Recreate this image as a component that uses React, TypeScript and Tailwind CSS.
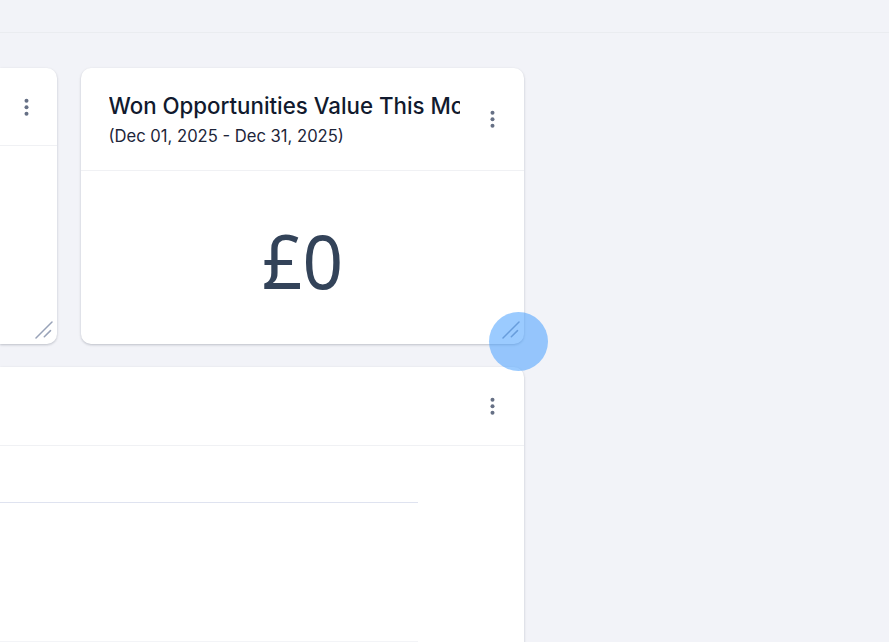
import React from 'react';

type WidgetProps = {
  className?: string;
  headerClassName?: string;
  title?: string;
  subtitle?: string;
  resizable?: boolean;
  children?: React.ReactNode;
};

const MenuDots = () => (
  <svg width="6" height="18" viewBox="0 0 6 18" fill="#667085" className="block shrink-0">
    <circle cx="3.5" cy="2.8" r="2" />
    <circle cx="3.5" cy="9.3" r="2" />
    <circle cx="3.5" cy="15.8" r="2" />
  </svg>
);

const ResizeHandle = () => (
  <svg
    width="18"
    height="18"
    viewBox="0 0 18 18"
    fill="none"
    stroke="#98a2b8"
    strokeWidth="1.5"
    strokeLinecap="round"
    className="absolute right-[4px] bottom-[5px]"
  >
    <path d="M1 17L17 1M9.3 15.8L15.5 9.6" />
  </svg>
);

const Widget = ({ className = '', headerClassName = '', title, subtitle, resizable, children }: WidgetProps) => (
  <section
    className={`relative flex flex-col bg-white shadow-[0_1px_3px_rgba(16,24,40,0.14),0_1px_2px_rgba(16,24,40,0.09)] ${className}`}
  >
    <header className={`flex shrink-0 items-center justify-end border-b border-[#f0f1f4] ${headerClassName}`}>
      {title && (
        <div className="mr-[29px] min-w-0 flex-1 overflow-hidden pt-px whitespace-nowrap">
          <h2 className="text-[22.27px] leading-[32px] font-medium text-[#111a2e]">{title}</h2>
          <p className="pt-px text-[16.6px] leading-[26px] text-[#1d2539]">{subtitle}</p>
        </div>
      )}
      <button type="button" className="shrink-0" aria-label="Widget options">
        <MenuDots />
      </button>
    </header>
    {children}
    {resizable && <ResizeHandle />}
  </section>
);

const App = () => {
  return (
    <div className="relative flex h-[642px] w-[889px] flex-col overflow-hidden bg-[#f2f3f8] font-['Inter',sans-serif]">
      {/* Toolbar */}
      <div className="h-[33px] shrink-0 border-b border-[#eaecf0]" />

      <main className="flex flex-1 flex-col gap-[23px] pt-[35px]">
        <div className="flex h-[276px] shrink-0 gap-6">
          <Widget className="w-[57px] rounded-r-[10px]" headerClassName="h-[78px] pr-[28px]" resizable />

          <Widget
            className="w-[443px] rounded-[10px]"
            headerClassName="h-[103px] pr-[29px] pl-[27.5px]"
            title="Won Opportunities Value This Month"
            subtitle="(Dec 01, 2025 - Dec 31, 2025)"
            resizable
          >
            <div className="flex flex-1 scale-x-[0.94] items-center justify-center pt-[5px] font-['Noto_Sans',sans-serif] text-[75.5px] leading-none text-[#334359]">
              £0
            </div>
          </Widget>
        </div>

        <Widget className="h-[400px] w-[524px] shrink-0 rounded-tr-[10px]" headerClassName="h-[79px] pr-[29px]">
          {/* Chart gridlines */}
          <div className="mt-[56px] h-px w-[418px] bg-[#dfe3f0]" />
          <div className="mt-[138px] h-px w-[418px] bg-[#f3f4f7]" />
        </Widget>
      </main>

      {/* Click highlight */}
      <div className="absolute top-[312px] left-[489px] size-[59px] rounded-full bg-[#3898ff]/50" />
    </div>
  );
};

export default App;
